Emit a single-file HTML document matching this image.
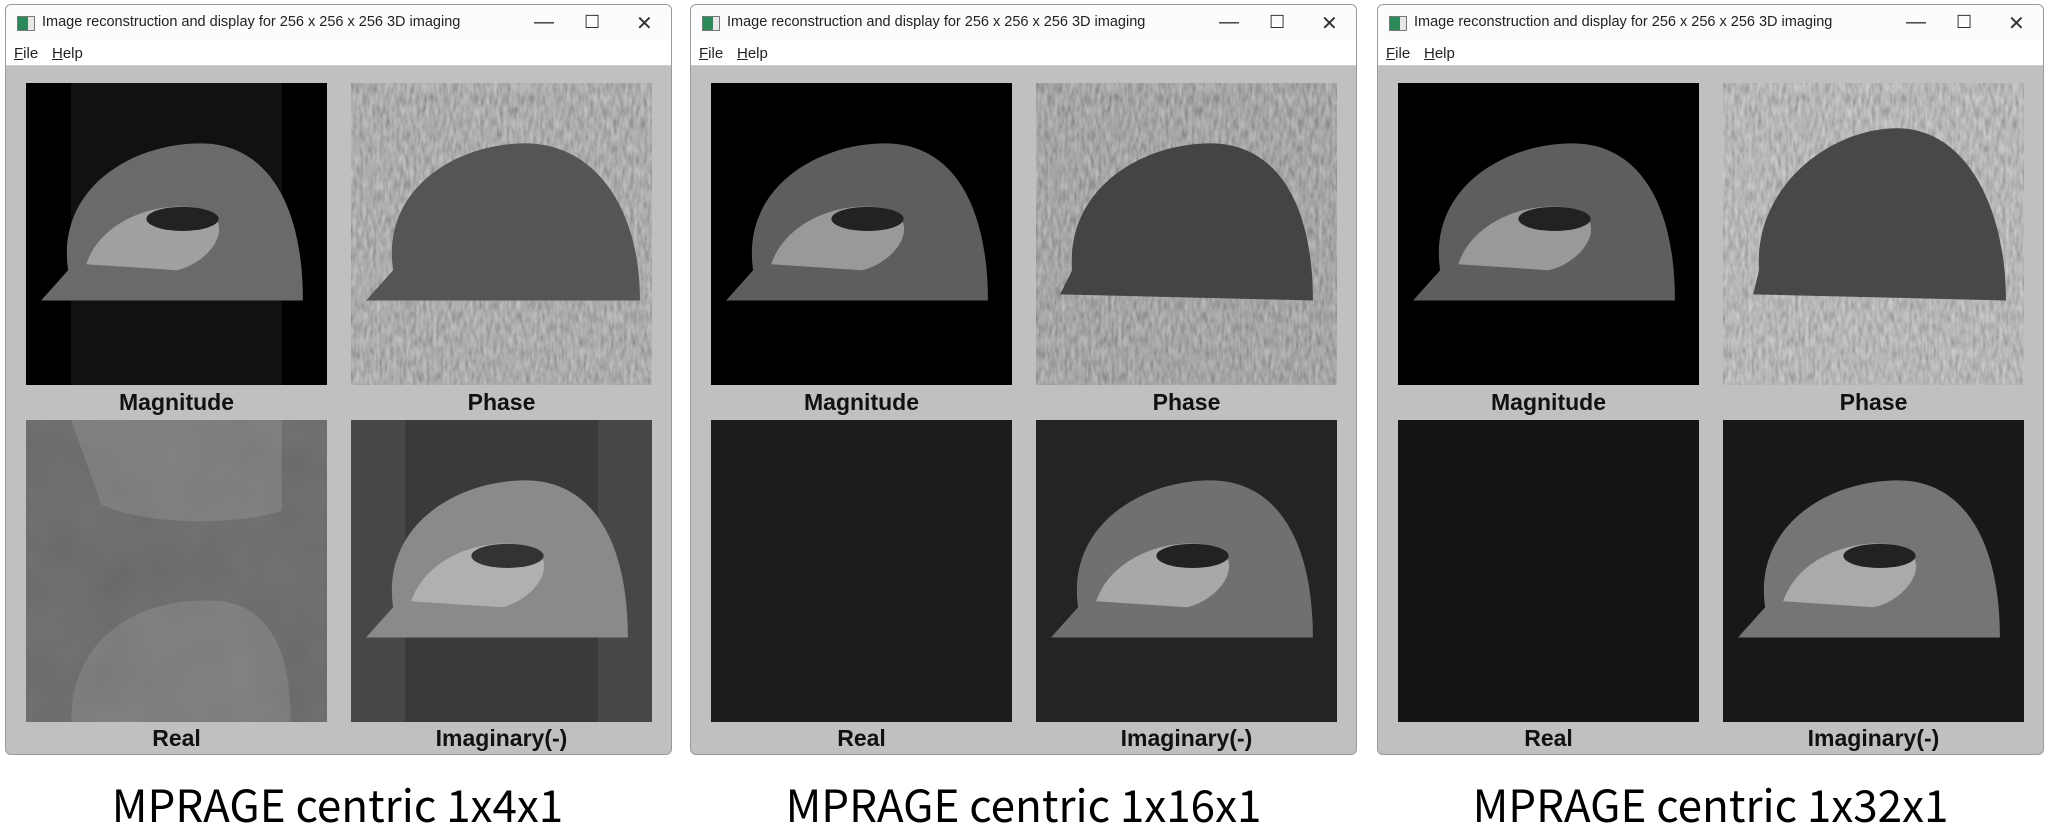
<!DOCTYPE html>
<html><head><meta charset="utf-8"><style>
body{margin:0;width:2048px;height:832px;background:#fff;position:relative;overflow:hidden;font-family:"Liberation Sans",sans-serif}
.win{position:absolute;top:4px;width:667px;height:751px;background:#c0c0c0;border:1px solid #9a9a9a;border-radius:6px;overflow:hidden;box-sizing:border-box}
.tb{position:absolute;left:0;top:0;right:0;height:36px;background:#fbfcfd}
.tb .t{position:absolute;left:36px;top:9px;font-size:14.5px;color:#222}
.ic{position:absolute;left:11px;top:11px;width:16px;height:13px;background:#2c8a5a;border:1px solid #777}
.ic:after{content:"";position:absolute;right:0;top:0;width:6px;height:13px;background:#e8e8e8}
.ctl{position:absolute;top:6px;font-size:20px;color:#333}
.mb{position:absolute;left:0;top:36px;right:0;height:24px;background:#fff;border-bottom:1px solid #ccc;font-size:15px;color:#222}
.mb span{position:absolute;top:4px}
.img{position:absolute;width:301px;height:302px}
.lbl{position:absolute;width:301px;text-align:center;font-weight:bold;font-size:23px;color:#111}
.cap{position:absolute;top:771px;font-family:"Noto Sans CJK JP","Liberation Sans",sans-serif;font-size:44px;color:#000;text-align:center;width:667px}
</style></head><body>

<svg width="0" height="0" style="position:absolute">
<defs>
<filter id="n" x="0" y="0" width="100%" height="100%"><feTurbulence type="fractalNoise" baseFrequency="0.9 0.25" numOctaves="2" seed="3"/><feColorMatrix type="saturate" values="0"/><feComponentTransfer><feFuncA type="table" tableValues="0.55 0.55"/></feComponentTransfer></filter>
<filter id="s" x="0" y="0" width="100%" height="100%"><feTurbulence type="fractalNoise" baseFrequency="0.05" numOctaves="3" seed="7"/><feColorMatrix type="saturate" values="0"/><feComponentTransfer><feFuncA type="table" tableValues="0.2 0.2"/></feComponentTransfer></filter>
</defs></svg>

<div class="win" style="left:5px">
 <div class="tb"><div class="ic"></div><div class="t">Image reconstruction and display for 256 x 256 x 256 3D imaging</div>
 <div class="ctl" style="left:528px">—</div><div class="ctl" style="left:578px;font-size:18px;top:7px">☐</div><div class="ctl" style="left:630px">✕</div></div>
 <div class="mb"><span style="left:8px"><u>F</u>ile</span><span style="left:46px"><u>H</u>elp</span></div>
 <svg class="img" style="left:20px;top:78px" viewBox="0 0 100 100" preserveAspectRatio="none"><rect width="100" height="100" fill="#000"/><rect x="15" width="70" height="100" fill="#111"/><path d="M5 72 L14 62 C10 35 35 20 58 20 C80 20 92 40 92 72Z" fill="#6a6a6a"/><path d="M20 60 C25 45 45 38 60 42 C70 48 60 60 50 62Z" fill="#a0a0a0"/><ellipse cx="52" cy="45" rx="12" ry="4" fill="#222"/></svg>
 <svg class="img" style="left:345px;top:78px" viewBox="0 0 100 100" preserveAspectRatio="none"><rect width="100" height="100" fill="#999"/><rect width="100" height="100" filter="url(#n)"/><path d="M5 72 L14 62 C10 35 35 20 58 20 C80 20 96 40 96 72Z" fill="#555"/></svg>
 <svg class="img" style="left:20px;top:415px" viewBox="0 0 100 100" preserveAspectRatio="none"><rect width="100" height="100" fill="#666"/><path d="M15 0 L85 0 L85 30 C70 35 40 35 25 28Z" fill="#787878"/><path d="M15 100 C15 70 40 58 65 60 C80 62 88 75 88 100Z" fill="#787878"/><rect width="100" height="100" filter="url(#s)" opacity=".5"/></svg>
 <svg class="img" style="left:345px;top:415px" viewBox="0 0 100 100" preserveAspectRatio="none"><rect width="100" height="100" fill="#474747"/><rect x="18" width="64" height="100" fill="#3a3a3a"/><path d="M5 72 L14 62 C10 35 35 20 58 20 C80 20 92 40 92 72Z" fill="#8a8a8a"/><path d="M20 60 C25 45 45 38 60 42 C70 48 60 60 50 62Z" fill="#b0b0b0"/><ellipse cx="52" cy="45" rx="12" ry="4" fill="#333"/></svg>
 <div class="lbl" style="left:20px;top:384px">Magnitude</div>
 <div class="lbl" style="left:345px;top:384px">Phase</div>
 <div class="lbl" style="left:20px;top:720px">Real</div>
 <div class="lbl" style="left:345px;top:720px">Imaginary(-)</div>
</div>

<div class="win" style="left:690px">
 <div class="tb"><div class="ic"></div><div class="t">Image reconstruction and display for 256 x 256 x 256 3D imaging</div>
 <div class="ctl" style="left:528px">—</div><div class="ctl" style="left:578px;font-size:18px;top:7px">☐</div><div class="ctl" style="left:630px">✕</div></div>
 <div class="mb"><span style="left:8px"><u>F</u>ile</span><span style="left:46px"><u>H</u>elp</span></div>
 <svg class="img" style="left:20px;top:78px" viewBox="0 0 100 100" preserveAspectRatio="none"><rect width="100" height="100" fill="#000"/><path d="M5 72 L14 62 C10 35 35 20 58 20 C80 20 92 40 92 72Z" fill="#5e5e5e"/><path d="M20 60 C25 45 45 38 60 42 C70 48 60 60 50 62Z" fill="#999"/><ellipse cx="52" cy="45" rx="12" ry="4" fill="#222"/></svg>
 <svg class="img" style="left:345px;top:78px" viewBox="0 0 100 100" preserveAspectRatio="none"><rect width="100" height="100" fill="#8a8a8a"/><rect width="100" height="100" filter="url(#n)"/><path d="M8 70 L12 62 C10 35 35 20 58 20 C80 20 92 40 92 72Z" fill="#444"/></svg>
 <svg class="img" style="left:20px;top:415px" viewBox="0 0 100 100" preserveAspectRatio="none"><rect width="100" height="100" fill="#1c1c1c"/></svg>
 <svg class="img" style="left:345px;top:415px" viewBox="0 0 100 100" preserveAspectRatio="none"><rect width="100" height="100" fill="#242424"/><path d="M5 72 L14 62 C10 35 35 20 58 20 C80 20 92 40 92 72Z" fill="#707070"/><path d="M20 60 C25 45 45 38 60 42 C70 48 60 60 50 62Z" fill="#a8a8a8"/><ellipse cx="52" cy="45" rx="12" ry="4" fill="#222"/></svg>
 <div class="lbl" style="left:20px;top:384px">Magnitude</div>
 <div class="lbl" style="left:345px;top:384px">Phase</div>
 <div class="lbl" style="left:20px;top:720px">Real</div>
 <div class="lbl" style="left:345px;top:720px">Imaginary(-)</div>
</div>

<div class="win" style="left:1377px">
 <div class="tb"><div class="ic"></div><div class="t">Image reconstruction and display for 256 x 256 x 256 3D imaging</div>
 <div class="ctl" style="left:528px">—</div><div class="ctl" style="left:578px;font-size:18px;top:7px">☐</div><div class="ctl" style="left:630px">✕</div></div>
 <div class="mb"><span style="left:8px"><u>F</u>ile</span><span style="left:46px"><u>H</u>elp</span></div>
 <svg class="img" style="left:20px;top:78px" viewBox="0 0 100 100" preserveAspectRatio="none"><rect width="100" height="100" fill="#000"/><path d="M5 72 L14 62 C10 35 35 20 58 20 C80 20 92 40 92 72Z" fill="#5e5e5e"/><path d="M20 60 C25 45 45 38 60 42 C70 48 60 60 50 62Z" fill="#999"/><ellipse cx="52" cy="45" rx="12" ry="4" fill="#222"/></svg>
 <svg class="img" style="left:345px;top:78px" viewBox="0 0 100 100" preserveAspectRatio="none"><rect width="100" height="100" fill="#b0b0b0"/><rect width="100" height="100" filter="url(#n)"/><path d="M10 70 L12 62 C10 35 35 15 58 15 C80 15 94 40 94 72Z" fill="#484848"/></svg>
 <svg class="img" style="left:20px;top:415px" viewBox="0 0 100 100" preserveAspectRatio="none"><rect width="100" height="100" fill="#141414"/></svg>
 <svg class="img" style="left:345px;top:415px" viewBox="0 0 100 100" preserveAspectRatio="none"><rect width="100" height="100" fill="#181818"/><path d="M5 72 L14 62 C10 35 35 20 58 20 C80 20 92 40 92 72Z" fill="#757575"/><path d="M20 60 C25 45 45 38 60 42 C70 48 60 60 50 62Z" fill="#aaa"/><ellipse cx="52" cy="45" rx="12" ry="4" fill="#222"/></svg>
 <div class="lbl" style="left:20px;top:384px">Magnitude</div>
 <div class="lbl" style="left:345px;top:384px">Phase</div>
 <div class="lbl" style="left:20px;top:720px">Real</div>
 <div class="lbl" style="left:345px;top:720px">Imaginary(-)</div>
</div>

<div class="cap" style="left:4px">MPRAGE centric 1x4x1</div>
<div class="cap" style="left:690px">MPRAGE centric 1x16x1</div>
<div class="cap" style="left:1377px">MPRAGE centric 1x32x1</div>
</body></html>
